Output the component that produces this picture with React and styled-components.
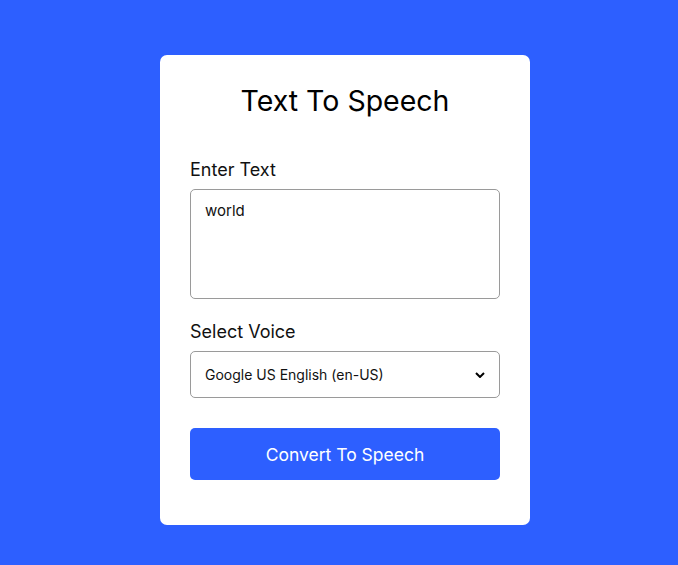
import React, { useState } from 'react';
import styled, { createGlobalStyle } from 'styled-components';

const colors = {
    main: '#2d5fff',
    text: '#111111',
    border: '#9a9a9a',
    card: '#ffffff',
};

const GlobalStyle = createGlobalStyle`
    html, body {
        margin: 0;
        padding: 0;
        background-color: ${colors.main};
        font-family: Inter, "Open Sans", sans-serif;
    }
`;

const Page = styled.div`
    min-height: 565px;
    box-sizing: border-box;
    padding: 55px 0 0 12px;
    display: flex;
    justify-content: center;
    align-items: flex-start;
`;

const Card = styled.div`
    width: 370px;
    box-sizing: border-box;
    background-color: ${colors.card};
    border-radius: 7px;
    padding: 26px 30px 45px;
    display: flex;
    flex-direction: column;
`;

const Title = styled.h1`
    margin: 0 0 37px;
    text-align: center;
    font-size: 28.5px;
    font-weight: 400;
    line-height: 40px;
    color: #000;
`;

const Label = styled.label`
    font-size: 18px;
    line-height: 24px;
    color: ${colors.text};
    margin-bottom: 7px;
`;

const TextArea = styled.textarea`
    width: 100%;
    height: 110px;
    box-sizing: border-box;
    border: 1px solid ${colors.border};
    border-radius: 5px;
    padding: 11px 14px;
    font-family: inherit;
    font-size: 15px;
    color: ${colors.text};
    resize: none;
    outline: none;
    margin-bottom: 21px;
`;

const SelectWrap = styled.div`
    position: relative;
    margin-bottom: 30px;
`;

const Select = styled.select`
    appearance: none;
    width: 100%;
    height: 47px;
    box-sizing: border-box;
    border: 1px solid ${colors.border};
    border-radius: 5px;
    padding: 0 40px 0 14px;
    font-family: inherit;
    font-size: 14px;
    color: ${colors.text};
    background-color: #fff;
    outline: none;
    display: block;
`;

const Chevron = styled.svg`
    position: absolute;
    right: 15px;
    top: 50%;
    width: 10px;
    height: 6px;
    margin-top: -3px;
    pointer-events: none;
`;

const Button = styled.button`
    width: 100%;
    height: 52px;
    border: none;
    border-radius: 5px;
    background-color: ${colors.main};
    color: #fff;
    font-family: inherit;
    font-size: 17.5px;
    cursor: pointer;
`;

const App = () => {
    const [text, setText] = useState('world');

    return (
        <Page>
            <GlobalStyle />
            <Card>
                <Title>Text To Speech</Title>
                <Label htmlFor="tts-text">Enter Text</Label>
                <TextArea id="tts-text" value={text} onChange={e => setText(e.target.value)} />
                <Label htmlFor="tts-voice">Select Voice</Label>
                <SelectWrap>
                    <Select id="tts-voice" defaultValue="en-US">
                        <option value="en-US">Google US English (en-US)</option>
                        <option value="en-GB">Google UK English Female (en-GB)</option>
                    </Select>
                    <Chevron viewBox="0 0 10 6">
                        <path d="M1 1l4 4 4-4" fill="none" stroke="#000" strokeWidth="2" />
                    </Chevron>
                </SelectWrap>
                <Button>Convert To Speech</Button>
            </Card>
        </Page>
    );
};

export default App;
